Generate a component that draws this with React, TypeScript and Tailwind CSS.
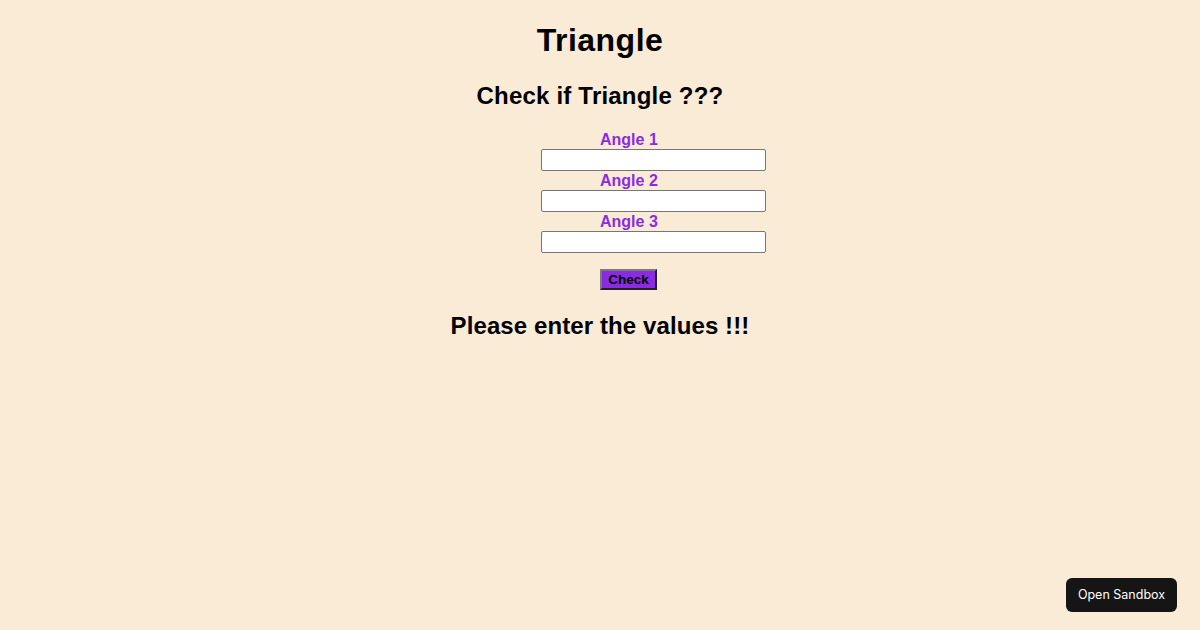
import React from "react";

export default function App() {
  return (
    <div
      className="min-h-screen w-full bg-[#faebd7] text-black"
      style={{ fontFamily: '"Liberation Sans", Arial, sans-serif' }}
    >
      <div className="flex flex-col items-center">
        <h1 className="mt-[22px] text-[32px] font-bold leading-[37px] tracking-[0.5px]">Triangle</h1>
        <h2 className="mt-[23px] text-[24px] font-bold leading-[28px] tracking-[0.2px]">Check if Triangle ???</h2>
      </div>
      <div className="mt-[20px] flex justify-center pl-[107px]">
        <div className="flex w-[225px] flex-col">
          {["Angle 1", "Angle 2", "Angle 3"].map((l) => (
            <div key={l} className="flex flex-col">
              <label className="ml-[59px] text-[16px] font-bold leading-[19px] text-[#8a2be2]">{l}</label>
              <input
                type="text"
                className="h-[22px] w-[225px] rounded-[2px] border border-[#767676] bg-white px-1 text-[13px] outline-none"
              />
            </div>
          ))}
          <button
            type="button"
            className="ml-[59px] mt-[16px] h-[21px] w-[57px] border-2 border-[#7a7a7a] border-r-[#222] border-b-[#222] bg-[#8a2be2] text-[13.5px] font-bold leading-[15px] text-black"
          >
            Check
          </button>
        </div>
      </div>
      <div className="flex justify-center">
        <h2 className="mt-[22px] text-[24px] font-bold leading-[28px] tracking-[0.1px]">Please enter the values !!!</h2>
      </div>
      <button
        type="button"
        className="fixed bottom-[18px] right-[23px] h-[34px] w-[111px] rounded-[6px] bg-[#151515] text-[12.5px] text-white"
        style={{ fontFamily: 'Inter, "Liberation Sans", sans-serif' }}
      >
        Open Sandbox
      </button>
    </div>
  );
}
